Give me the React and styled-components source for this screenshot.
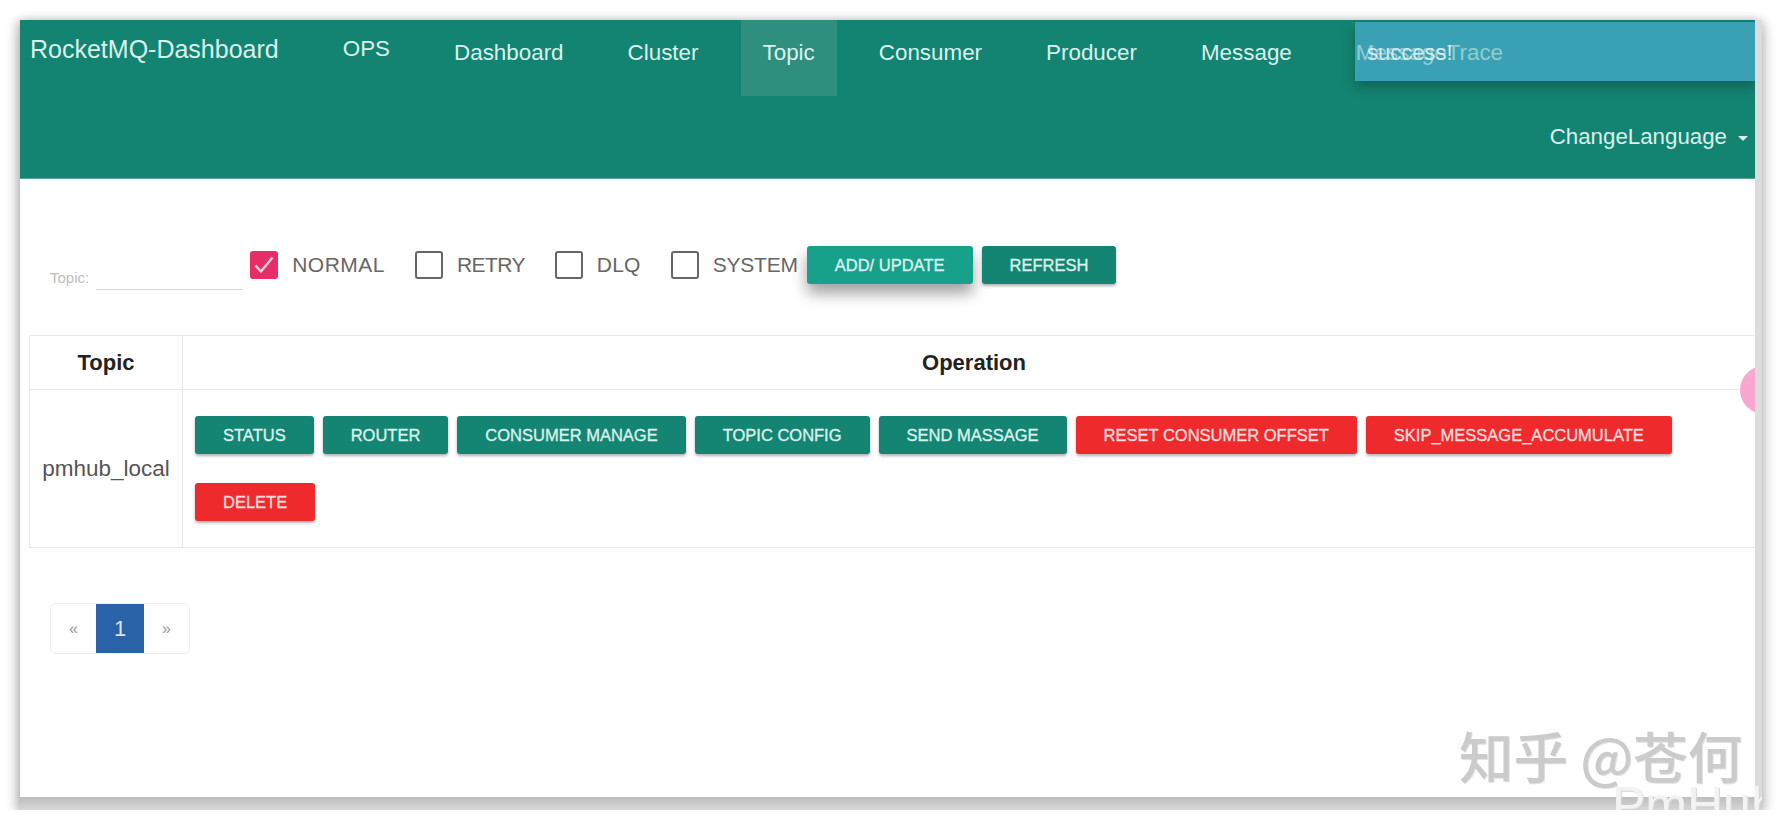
import React from 'react';
import styled, { createGlobalStyle } from 'styled-components';

const navLinks = [
  { label: 'OPS', top: 16 },
  { label: 'Dashboard', top: 20 },
  { label: 'Cluster', top: 20 },
  { label: 'Topic', top: 20, active: true },
  { label: 'Consumer', top: 20 },
  { label: 'Producer', top: 20 },
  { label: 'Message', top: 20 },
  { label: 'MessageTrace', top: 20, faded: true },
];

const filters = [
  { label: 'NORMAL', checked: true, spread: 0.5 },
  { label: 'RETRY', spread: -0.6 },
  { label: 'DLQ', spread: 0.2 },
  { label: 'SYSTEM', spread: -0.2 },
];

const operations = [
  { label: 'STATUS' },
  { label: 'ROUTER' },
  { label: 'CONSUMER MANAGE' },
  { label: 'TOPIC CONFIG' },
  { label: 'SEND MASSAGE' },
  { label: 'RESET CONSUMER OFFSET', danger: true },
  { label: 'SKIP_MESSAGE_ACCUMULATE', danger: true },
  { label: 'DELETE', danger: true },
];

const App = () => {
  return (
    <>
      <GlobalStyle />
      <Frame>
        <Screen>
          <NavBar>
            <NavRow>
              <Brand>RocketMQ-Dashboard</Brand>
              {navLinks.map((link) => (
                <NavLink key={link.label} $top={link.top} $active={link.active} $faded={link.faded}>
                  {link.label}
                </NavLink>
              ))}
            </NavRow>
            <LanguageRow>
              ChangeLanguage
              <Caret />
            </LanguageRow>
            <Toast>success!</Toast>
          </NavBar>

          <Toolbar>
            <TopicField>
              <TopicLabel>Topic:</TopicLabel>
              <TopicInput />
            </TopicField>
            {filters.map((filter) => (
              <Filter key={filter.label} $spread={filter.spread}>
                <CheckBox $checked={filter.checked}>
                  {filter.checked && (
                    <svg width="22" height="22" viewBox="0 0 22 22" fill="none">
                      <path d="M2.5 11.5 L8 17.5 L19.5 3.5" stroke="#fbd5e0" strokeWidth="2.4" />
                    </svg>
                  )}
                </CheckBox>
                {filter.label}
              </Filter>
            ))}
            <ToolbarButtons>
              <ActionButton $raised>ADD/ UPDATE</ActionButton>
              <ActionButton>REFRESH</ActionButton>
            </ToolbarButtons>
          </Toolbar>

          <TopicTable>
            <thead>
              <tr>
                <HeadCell $width={152}>Topic</HeadCell>
                <HeadCell>Operation</HeadCell>
              </tr>
            </thead>
            <tbody>
              <tr>
                <NameCell>pmhub_local</NameCell>
                <ButtonCell>
                  <ButtonWrap>
                    {operations.map((op) => (
                      <ActionButton key={op.label} $danger={op.danger}>
                        {op.label}
                      </ActionButton>
                    ))}
                  </ButtonWrap>
                </ButtonCell>
              </tr>
            </tbody>
          </TopicTable>

          <Pagination>
            <PageItem $width={45}>«</PageItem>
            <PageItem $width={48} $current>1</PageItem>
            <PageItem $width={45}>»</PageItem>
          </Pagination>

          <FloatDot />
        </Screen>
        <Watermark>知乎 @苍何</Watermark>
        <WatermarkLatin>PmHub</WatermarkLatin>
      </Frame>
    </>
  );
};

const GlobalStyle = createGlobalStyle`
  html, body {
    margin: 0;
    padding: 0;
    background: #fff;
    overflow: hidden;
  }
  body {
    font-family: "Liberation Sans", Arial, sans-serif;
  }
`;

const Frame = styled.div`
  position: relative;
  width: 1742px;
  height: 790px;
  margin: 20px 0 0 20px;
  padding: 0 7px 13px 0;
  box-sizing: border-box;
  overflow: hidden;
  background: linear-gradient(#dcdcdc 0, #dcdcdc 777px, #bebebe 777px, #d6d6d6 100%);
  box-shadow: 0 7px 14px rgba(0, 0, 0, 0.22), -4px 0 9px rgba(0, 0, 0, 0.16), 4px 0 9px rgba(0, 0, 0, 0.1);
`;

const Screen = styled.div`
  position: relative;
  height: 777px;
  overflow: hidden;
  background: #fff;
`;

const NavBar = styled.div`
  position: relative;
  height: 159px;
  box-sizing: border-box;
  background: #138471;
  border-bottom: 1px solid #5ba99b;
  color: #d9f1ec;
`;

const NavRow = styled.div`
  display: flex;
  height: 76px;
  gap: 20px;
  padding-left: 10px;
`;

const Brand = styled.div`
  font-size: 25px;
  line-height: 30px;
  padding-top: 14px;
  margin-right: 22px;
`;

const NavLink = styled.div`
  position: relative;
  z-index: ${(p) => (p.$faded ? 2 : 0)};
  padding: ${(p) => p.$top}px 22px 0;
  font-size: 22.4px;
  line-height: 26px;
  background: ${(p) => (p.$active ? '#2e8f7f' : 'transparent')};
  opacity: ${(p) => (p.$faded ? 0.55 : 1)};
`;

const LanguageRow = styled.div`
  display: flex;
  justify-content: flex-end;
  align-items: center;
  height: 82px;
  padding-right: 7px;
  font-size: 22.3px;
`;

const Caret = styled.span`
  width: 0;
  height: 0;
  margin-left: 11px;
  margin-top: 3px;
  border-left: 5px solid transparent;
  border-right: 5px solid transparent;
  border-top: 5px solid #d9f1ec;
`;

const Toast = styled.div`
  position: absolute;
  z-index: 1;
  top: 2px;
  right: 0;
  width: 400px;
  height: 59px;
  box-sizing: border-box;
  padding: 18px 0 0 12px;
  font-size: 22px;
  line-height: 26px;
  color: #d2e9ee;
  background: #3aa0b3;
  box-shadow: 0 6px 12px rgba(0, 0, 0, 0.25);
`;

const Toolbar = styled.div`
  display: flex;
  align-items: flex-start;
  height: 156px;
  box-sizing: border-box;
  padding: 67px 0 0 30px;
`;

const TopicField = styled.div`
  display: flex;
  align-items: flex-end;
  gap: 7px;
  height: 44px;
  margin-right: 7px;
`;

const TopicLabel = styled.span`
  padding-bottom: 3px;
  font-size: 15px;
  line-height: 18px;
  color: #bdbdbd;
`;

const TopicInput = styled.div`
  width: 147px;
  height: 30px;
  border-bottom: 1px solid #d6d6d6;
`;

const Filter = styled.label`
  display: flex;
  align-items: center;
  gap: 14px;
  height: 38px;
  margin-right: 30px;
  font-size: 21px;
  letter-spacing: ${(p) => p.$spread}px;
  color: #666;
  &:last-of-type {
    margin-right: 9px;
  }
`;

const CheckBox = styled.span`
  display: flex;
  align-items: center;
  justify-content: center;
  width: 28px;
  height: 28px;
  box-sizing: border-box;
  border-radius: 3px;
  border: 2px solid ${(p) => (p.$checked ? '#e92d66' : '#666')};
  background: ${(p) => (p.$checked ? '#e92d66' : 'transparent')};
`;

const ToolbarButtons = styled.div`
  display: flex;
  gap: 9px;
`;

const ActionButton = styled.button`
  height: 38px;
  padding: 0 28px;
  border: 0;
  border-radius: 3px;
  font-family: "Liberation Sans", Arial, sans-serif;
  font-size: 16.5px;
  -webkit-text-stroke: 0.35px currentColor;
  color: ${(p) => (p.$danger ? '#fbdcdc' : '#d9f1ec')};
  background: ${(p) => (p.$danger ? '#ee2a2c' : p.$raised ? '#17a08a' : '#148572')};
  box-shadow: ${(p) => (p.$raised ? '0 9px 15px rgba(0, 0, 0, 0.38)' : '0 2px 3px rgba(0, 0, 0, 0.3)')};
`;

const TopicTable = styled.table`
  width: 1737px;
  margin-left: 9px;
  table-layout: fixed;
  border-collapse: collapse;
  border: 1px solid #e8e8e8;
`;

const HeadCell = styled.th`
  width: ${(p) => (p.$width ? `${p.$width}px` : 'auto')};
  height: 53px;
  padding: 0;
  font-size: 22px;
  color: #222;
  border: 1px solid #e8e8e8;
`;

const NameCell = styled.td`
  padding: 0;
  text-align: center;
  font-size: 22.5px;
  color: #555;
  border: 1px solid #e8e8e8;
`;

const ButtonCell = styled.td`
  padding: 26px 12px;
  border: 1px solid #e8e8e8;
`;

const ButtonWrap = styled.div`
  display: flex;
  flex-wrap: wrap;
  gap: 29px 9px;
`;

const Pagination = styled.div`
  display: flex;
  width: fit-content;
  height: 49px;
  margin: 55px 0 0 30px;
  border: 1px solid #eee;
  border-radius: 6px;
  overflow: hidden;
`;

const PageItem = styled.div`
  display: flex;
  align-items: center;
  justify-content: center;
  width: ${(p) => p.$width}px;
  font-size: ${(p) => (p.$current ? '22px' : '16px')};
  color: ${(p) => (p.$current ? '#d5e3f3' : '#999')};
  background: ${(p) => (p.$current ? '#2a62a8' : '#fff')};
`;

const FloatDot = styled.div`
  position: absolute;
  top: 346px;
  right: -33px;
  width: 48px;
  height: 48px;
  border-radius: 50%;
  background: #f8a8cf;
`;

const Watermark = styled.div`
  position: absolute;
  top: 700px;
  left: 1439px;
  font-family: "Noto Sans CJK SC", sans-serif;
  font-size: 54.5px;
  font-weight: 500;
  line-height: 70px;
  white-space: nowrap;
  color: #cbcbcb;
  text-shadow: 1px 1px 0 #e2e2e2;
`;

const WatermarkLatin = styled.div`
  position: absolute;
  top: 755px;
  left: 1592px;
  font-family: "Liberation Sans", sans-serif;
  font-size: 50px;
  line-height: 60px;
  white-space: nowrap;
  color: #f3f3f3;
  text-shadow: 1px 1px 0 #d5d5d5;
`;

export default App;
